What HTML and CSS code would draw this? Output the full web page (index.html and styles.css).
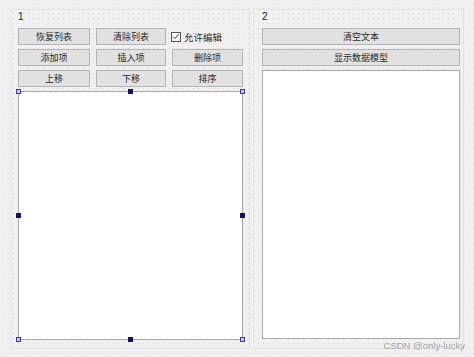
FILE: index.html
```html
<!DOCTYPE html>
<html lang="zh">
<head>
<meta charset="utf-8">
<link rel="stylesheet" href="styles.css">
</head>
<body>
<div class="form">
  <div class="group group-left">
    <div class="group-title">1</div>
    <div class="btn-grid">
      <div class="btn">恢复列表</div>
      <div class="btn">清除列表</div>
      <label class="check"><span class="box"><svg width="9" height="9" viewBox="0 0 9 9"><path d="M1.5 4.6 L3.6 6.8 L7.6 1.8" fill="none" stroke="#333" stroke-width="1.1"/></svg></span>允许编辑</label>
      <div class="btn">添加项</div>
      <div class="btn">插入项</div>
      <div class="btn">删除项</div>
      <div class="btn">上移</div>
      <div class="btn">下移</div>
      <div class="btn">排序</div>
    </div>
    <div class="list-wrap">
      <div class="list"></div>
      <span class="handle corner h-tl"></span>
      <span class="handle mid h-tm"></span>
      <span class="handle corner h-tr"></span>
      <span class="handle mid h-ml"></span>
      <span class="handle mid h-mr"></span>
      <span class="handle corner h-bl"></span>
      <span class="handle mid h-bm"></span>
      <span class="handle corner h-br"></span>
    </div>
  </div>
  <div class="group group-right">
    <div class="group-title">2</div>
    <div class="right-col">
      <div class="btn">清空文本</div>
      <div class="btn">显示数据模型</div>
      <div class="textedit"></div>
    </div>
  </div>
</div>
<div class="watermark">CSDN @only-lucky</div>
</body>
</html>
```
FILE: styles.css
```css
html, body {
  margin: 0;
  padding: 0;
}
body {
  width: 474px;
  height: 357px;
  overflow: hidden;
  position: relative;
  background-color: #f0f0f0;
  background-image: radial-gradient(circle, #d8d8d8 0.55px, transparent 0.9px);
  background-size: 5px 5px;
  background-position: 1px 1px;
  font-family: "Noto Sans CJK SC", "Liberation Sans", sans-serif;
  color: #222;
}
.form {
  display: flex;
  padding: 9px 0 0 11px;
  gap: 3px;
}
.group {
  box-sizing: border-box;
  height: 340px;
  border: 1px solid #e2e2e2;
  display: flex;
  flex-direction: column;
}
.group-left {
  width: 239px;
  padding: 0 6px 0 6px;
}
.group-right {
  width: 211px;
  padding: 0 3px 0 8px;
}
.group-title {
  font-family: "Liberation Sans", sans-serif;
  font-size: 10px;
  line-height: 10px;
  height: 10px;
  margin: 2px 0 6px 0;
  color: #222;
}
.btn-grid {
  display: grid;
  grid-template-columns: 72px 70px 71px;
  column-gap: 6px;
  row-gap: 4px;
  width: 225px;
  grid-auto-rows: 17px;
}
.btn {
  box-sizing: border-box;
  height: 17px;
  background: #e1e1e1;
  border: 1px solid #b4b4b4;
  font-size: 9px;
  line-height: 15px;
  text-align: center;
  color: #2a2a2a;
}
.check {
  display: flex;
  align-items: center;
  gap: 3px;
  font-size: 9.5px;
  color: #2a2a2a;
  margin-left: -1px;
}
.box {
  box-sizing: border-box;
  width: 10px;
  height: 10px;
  border: 1px solid #555;
  background: #fff;
  display: flex;
  align-items: center;
  justify-content: center;
}
.list-wrap {
  position: relative;
  margin-top: 4px;
  width: 225px;
  height: 249px;
}
.list {
  box-sizing: border-box;
  width: 100%;
  height: 100%;
  background: #fff;
  border: 1px solid #a8a8a8;
}
.handle {
  position: absolute;
  box-sizing: border-box;
  width: 5px;
  height: 5px;
}
.corner {
  border: 1px solid #3c3ca0;
  background: #c8c8ec;
}
.mid {
  background: #14145a;
}
.h-tl { left: -2px; top: -2px; }
.h-tm { left: 110px; top: -2px; }
.h-tr { right: -2px; top: -2px; }
.h-ml { left: -2px; top: 122px; }
.h-mr { right: -2px; top: 122px; }
.h-bl { left: -2px; bottom: -2px; }
.h-bm { left: 110px; bottom: -2px; }
.h-br { right: -2px; bottom: -2px; }
.right-col {
  display: flex;
  flex-direction: column;
  gap: 4px;
  width: 198px;
}
.textedit {
  box-sizing: border-box;
  height: 269px;
  background: #fff;
  border: 1px solid #a8a8a8;
}
.watermark {
  position: absolute;
  right: 9px;
  bottom: 6px;
  font-family: "Liberation Sans", sans-serif;
  font-size: 9.5px;
  color: #a4a4a4;
}
```
